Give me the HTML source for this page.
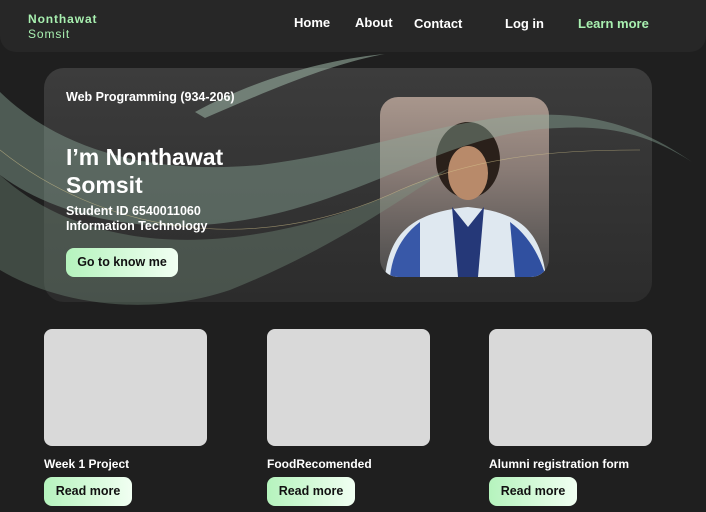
<!DOCTYPE html>
<html><head><style>
*{margin:0;padding:0;box-sizing:border-box}
body{width:706px;height:512px;background:#1f1f1f;font-family:"Liberation Sans",sans-serif;position:relative;overflow:hidden;color:#fff}
.nav{position:absolute;left:0;top:0;width:706px;height:52px;background:#272727;border-radius:0 0 16px 16px;z-index:3}
.logo{position:absolute;left:28px;top:12px;font-size:12px;color:#a8f0b0;line-height:15px;letter-spacing:.9px}
.logo b{font-weight:700}
.nl{position:absolute;top:15px;font-size:13px;font-weight:700;color:#fff}
.hero{position:absolute;left:44px;top:68px;width:608px;height:234px;border-radius:20px;background:linear-gradient(180deg,#3c3c3c,#2c2c2c);overflow:hidden}
.t{position:absolute;z-index:2;font-weight:700}
.photo{position:absolute;left:380px;top:97px;width:169px;height:180px;border-radius:18px;background:linear-gradient(180deg,#a8968c 0%,#8a7c76 40%,#4c4c4c 100%);z-index:1;overflow:hidden}
.btn{position:absolute;border-radius:8px;background:linear-gradient(90deg,#b5f3bd,#f1fff2);color:#111;font-weight:700;font-size:12.5px;text-align:center;z-index:2}
.card{position:absolute;top:329px;width:163px;height:117px;background:#d9d9d9;border-radius:8px}
.ct{position:absolute;top:457px;font-size:12px;font-weight:700}
</style></head><body>
<div class="nav">
<div class="logo"><b>Nonthawat</b><br>Somsit</div>
<div class="nl" style="left:294px">Home</div>
<div class="nl" style="left:355px">About</div>
<div class="nl" style="left:414px;top:16px">Contact</div>
<div class="nl" style="left:505px;top:16px">Log in</div>
<div class="nl" style="left:578px;top:16px;color:#a8f0b0">Learn more</div>
</div>
<div class="hero"></div>
<div class="photo">
<svg width="169" height="180">
<ellipse cx="88" cy="63" rx="32" ry="38" fill="#2a201a"/>
<ellipse cx="88" cy="76" rx="20" ry="27" fill="#b88a6a"/>
<path d="M5 180 C10 130 40 115 88 110 C136 115 160 130 166 180Z" fill="#dfe8f0"/>
<path d="M130 125 C150 140 160 160 166 180 L135 180Z" fill="#3050a0"/>
<path d="M40 125 C20 140 12 160 10 180 L40 180Z" fill="#3858a8"/>
<path d="M72 110 L88 130 L104 110 L98 180 L78 180Z" fill="#253878"/>
</svg>
</div>
<svg width="706" height="512" viewBox="0 0 706 512" style="position:absolute;left:0;top:0;z-index:1">
<path d="M0 92 C60 150 150 175 260 165 C380 150 470 110 560 115 C620 118 660 140 692 162 C650 135 610 125 560 128 C460 130 380 190 270 215 C160 240 60 220 0 175 Z" fill="#8fae9e" opacity=".42"/>
<path d="M0 175 C60 230 150 250 250 235 C340 222 400 190 450 168 C400 200 330 250 230 290 C140 320 50 300 0 270 Z" fill="#7e9c86" opacity=".35"/>
<path d="M195 112 C250 82 320 60 385 54 C330 64 270 90 205 118Z" fill="#9fb8a8" opacity=".55"/>
<path d="M0 150 C100 230 250 260 400 190 C480 155 560 150 640 150" stroke="#d8c890" stroke-width=".6" fill="none" opacity=".6"/>
</svg>
<div class="t" style="left:66px;top:90px;font-size:12.5px">Web Programming (934-206)</div>
<div class="t" style="left:66px;top:143px;font-size:23px;line-height:28px">I’m Nonthawat<br>Somsit</div>
<div class="t" style="left:66px;top:204px;font-size:12.5px;line-height:15px">Student ID 6540011060<br>Information Technology</div>
<div class="btn" style="left:66px;top:248px;width:112px;height:29px;line-height:29px">Go to know me</div>
<div class="card" style="left:44px"></div>
<div class="card" style="left:267px"></div>
<div class="card" style="left:489px"></div>
<div class="ct" style="left:44px">Week 1 Project</div>
<div class="ct" style="left:267px">FoodRecomended</div>
<div class="ct" style="left:489px">Alumni registration form</div>
<div class="btn" style="left:44px;top:477px;width:88px;height:29px;line-height:29px">Read more</div>
<div class="btn" style="left:267px;top:477px;width:88px;height:29px;line-height:29px">Read more</div>
<div class="btn" style="left:489px;top:477px;width:88px;height:29px;line-height:29px">Read more</div>
</body></html>
